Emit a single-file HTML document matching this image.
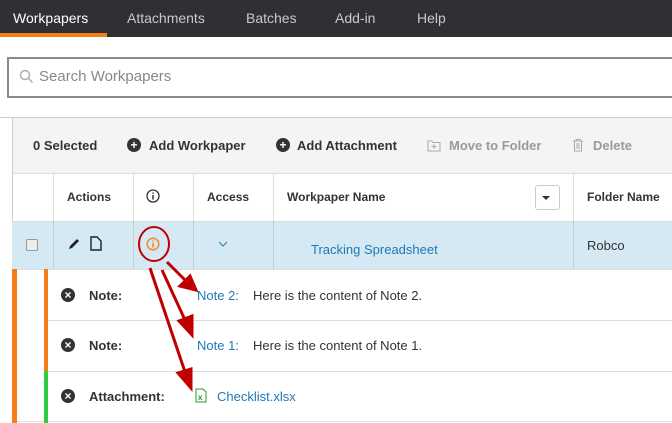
<!DOCTYPE html><html><head><style>
body{margin:0;width:672px;height:423px;overflow:hidden;background:#fff;font-family:"Liberation Sans",sans-serif;font-size:13px;color:#333;position:relative}
.a{position:absolute;white-space:nowrap}
.b{font-weight:bold}
.nav{position:absolute;left:0;top:0;width:672px;height:37px;background:#2f3035}
.nav span{position:absolute;top:10px;color:#c8c9cc;font-size:14px}
.vl{position:absolute;width:1px;background:#ddd}
.hl{position:absolute;height:1px;background:#ddd}
.cx{position:absolute;width:14px;height:14px;border-radius:50%;background:#333;color:#fff;font-size:12px;line-height:14px;text-align:center;font-weight:bold}
</style></head><body>
<div class="nav">
<span style="left:13px;color:#fff">Workpapers</span>
<span style="left:127px">Attachments</span>
<span style="left:246px">Batches</span>
<span style="left:335px">Add-in</span>
<span style="left:417px">Help</span>
<div style="position:absolute;left:0;top:33px;width:107px;height:4px;background:#f57f17"></div>
</div>
<div style="position:absolute;left:7px;top:57px;width:680px;height:37px;border:2px solid #8a8a8a;border-right:none"></div>
<svg class="a" style="left:19px;top:69px" width="15" height="15"><circle cx="6" cy="6" r="4.5" fill="none" stroke="#aaa" stroke-width="1.4"/><line x1="9.5" y1="9.5" x2="13.5" y2="13.5" stroke="#aaa" stroke-width="1.5"/></svg>
<div class="a" style="left:39px;top:68px;font-size:15px;line-height:18px;color:#888">Search Workpapers</div>
<div class="hl" style="left:0;top:117px;width:672px;background:#ccc"></div>
<div style="position:absolute;left:12px;top:118px;width:660px;height:55px;background:#f3f4f6"></div>
<div class="vl" style="left:12px;top:117px;height:306px;background:#ccc"></div>
<div class="a b" style="left:33px;top:138px">0 Selected</div>
<div class="cx" style="left:127px;top:138px">+</div><div class="a b" style="left:149px;top:138px">Add Workpaper</div>
<div class="cx" style="left:276px;top:138px">+</div><div class="a b" style="left:297px;top:138px">Add Attachment</div>
<svg class="a" style="left:427px;top:139px" width="14" height="13"><path d="M1 2h4l1 1.5h7v8.5H1z" fill="none" stroke="#aaa"/><path d="M7 5v5M4.5 7.5h5" stroke="#aaa"/></svg>
<div class="a b" style="left:449px;top:138px;color:#9a9a9a">Move to Folder</div>
<svg class="a" style="left:572px;top:138px" width="12" height="14"><path d="M1 3h10M4 3V1.5h4V3M2.5 3v10h7V3M5 5v6M7 5v6" fill="none" stroke="#aaa"/></svg>
<div class="a b" style="left:593px;top:138px;color:#9a9a9a">Delete</div>
<div class="hl" style="left:12px;top:173px;width:660px"></div>
<div class="vl" style="left:53px;top:173px;height:96px"></div>
<div class="vl" style="left:133px;top:173px;height:96px"></div>
<div class="vl" style="left:193px;top:173px;height:96px"></div>
<div class="vl" style="left:273px;top:173px;height:96px"></div>
<div class="vl" style="left:573px;top:173px;height:96px"></div>
<div class="a b" style="left:67px;top:190px;font-size:12px">Actions</div>
<svg class="a" style="left:146px;top:189px" width="14" height="14"><circle cx="7" cy="7" r="6" fill="none" stroke="#333" stroke-width="1.3"/><path d="M7 6v4.5M7 3.5v1.3" stroke="#333" stroke-width="1.5"/></svg>
<div class="a b" style="left:207px;top:190px;font-size:12px">Access</div>
<div class="a b" style="left:287px;top:190px;font-size:12px">Workpaper Name</div>
<div style="position:absolute;left:535px;top:185px;width:23px;height:23px;border:1px solid #ccc;border-radius:3px;background:#fff"></div>
<div style="position:absolute;left:542px;top:196px;border:4px solid transparent;border-top:4px solid #333"></div>
<div class="a b" style="left:587px;top:190px;font-size:12px">Folder Name</div>
<div style="position:absolute;left:12px;top:221px;width:660px;height:48px;background:#d4e9f3"></div>
<div class="hl" style="left:12px;top:221px;width:660px"></div>
<div class="vl" style="left:53px;top:221px;height:48px;background:#ccc"></div>
<div class="vl" style="left:133px;top:221px;height:48px;background:#ccc"></div>
<div class="vl" style="left:193px;top:221px;height:48px;background:#ccc"></div>
<div class="vl" style="left:273px;top:221px;height:48px;background:#ccc"></div>
<div class="vl" style="left:573px;top:221px;height:48px;background:#ccc"></div>
<div style="position:absolute;left:26px;top:239px;width:10px;height:10px;border:1px solid #999;border-radius:2px;background:#eee"></div>
<svg class="a" style="left:67px;top:237px" width="14" height="14"><path d="M2 12l1-3 7-7 2 2-7 7z" fill="#222"/></svg>
<svg class="a" style="left:90px;top:236px" width="12" height="15"><path d="M1 1h6l4 4v9H1z" fill="none" stroke="#222" stroke-width="1.4"/></svg>
<svg class="a" style="left:146px;top:237px" width="14" height="14"><circle cx="7" cy="7" r="5.8" fill="none" stroke="#f58a1f" stroke-width="1.5"/><path d="M7 6v4.5M7 3.5v1.3" stroke="#f58a1f" stroke-width="1.6"/></svg>
<svg class="a" style="left:218px;top:241px" width="10" height="6"><path d="M1 1l4 4 4-4" fill="none" stroke="#2a7db0"/></svg>
<div class="a" style="left:311px;top:242px;color:#1f78b4">Tracking Spreadsheet</div>
<div class="a" style="left:587px;top:238px">Robco</div>
<div class="hl" style="left:12px;top:269px;width:660px"></div>
<div class="hl" style="left:44px;top:320px;width:628px"></div>
<div class="hl" style="left:44px;top:371px;width:628px"></div>
<div class="hl" style="left:12px;top:421px;width:660px"></div>
<div style="position:absolute;left:12px;top:269px;width:5px;height:154px;background:#f57f17"></div>
<div style="position:absolute;left:44px;top:269px;width:4px;height:102px;background:#f57f17"></div>
<div style="position:absolute;left:44px;top:371px;width:4px;height:52px;background:#2ecc40"></div>
<div class="cx" style="left:61px;top:288px">×</div><div class="a b" style="left:89px;top:288px">Note:</div>
<div class="a" style="left:197px;top:288px;color:#1f78b4">Note 2:</div><div class="a" style="left:253px;top:288px">Here is the content of Note 2.</div>
<div class="cx" style="left:61px;top:338px">×</div><div class="a b" style="left:89px;top:338px">Note:</div>
<div class="a" style="left:197px;top:338px;color:#1f78b4">Note 1:</div><div class="a" style="left:253px;top:338px">Here is the content of Note 1.</div>
<div class="cx" style="left:61px;top:389px">×</div><div class="a b" style="left:89px;top:389px">Attachment:</div>
<svg class="a" style="left:195px;top:388px" width="12" height="15"><path d="M1 1h7l3 3v10H1z" fill="#fff" stroke="#2a9d2a"/><text x="3" y="12" font-size="8" font-weight="bold" fill="#2a9d2a" font-family="Liberation Sans">x</text></svg>
<div class="a" style="left:217px;top:389px;color:#1f78b4">Checklist.xlsx</div>
<svg class="a" style="left:0;top:0" width="672" height="423">
<ellipse cx="154" cy="244" rx="15" ry="17" fill="none" stroke="#c00000" stroke-width="2"/>
<g stroke="#c00000" stroke-width="3" fill="#c00000">
<line x1="167" y1="262" x2="186" y2="281"/><polygon points="196,290 180,286 190,276"/>
<line x1="162" y1="270" x2="185" y2="320"/><polygon points="192,335 179,321 192,316"/>
<line x1="150" y1="268" x2="185" y2="372"/><polygon points="191,388 178,373 191,369"/>
</g></svg>
</body></html>
